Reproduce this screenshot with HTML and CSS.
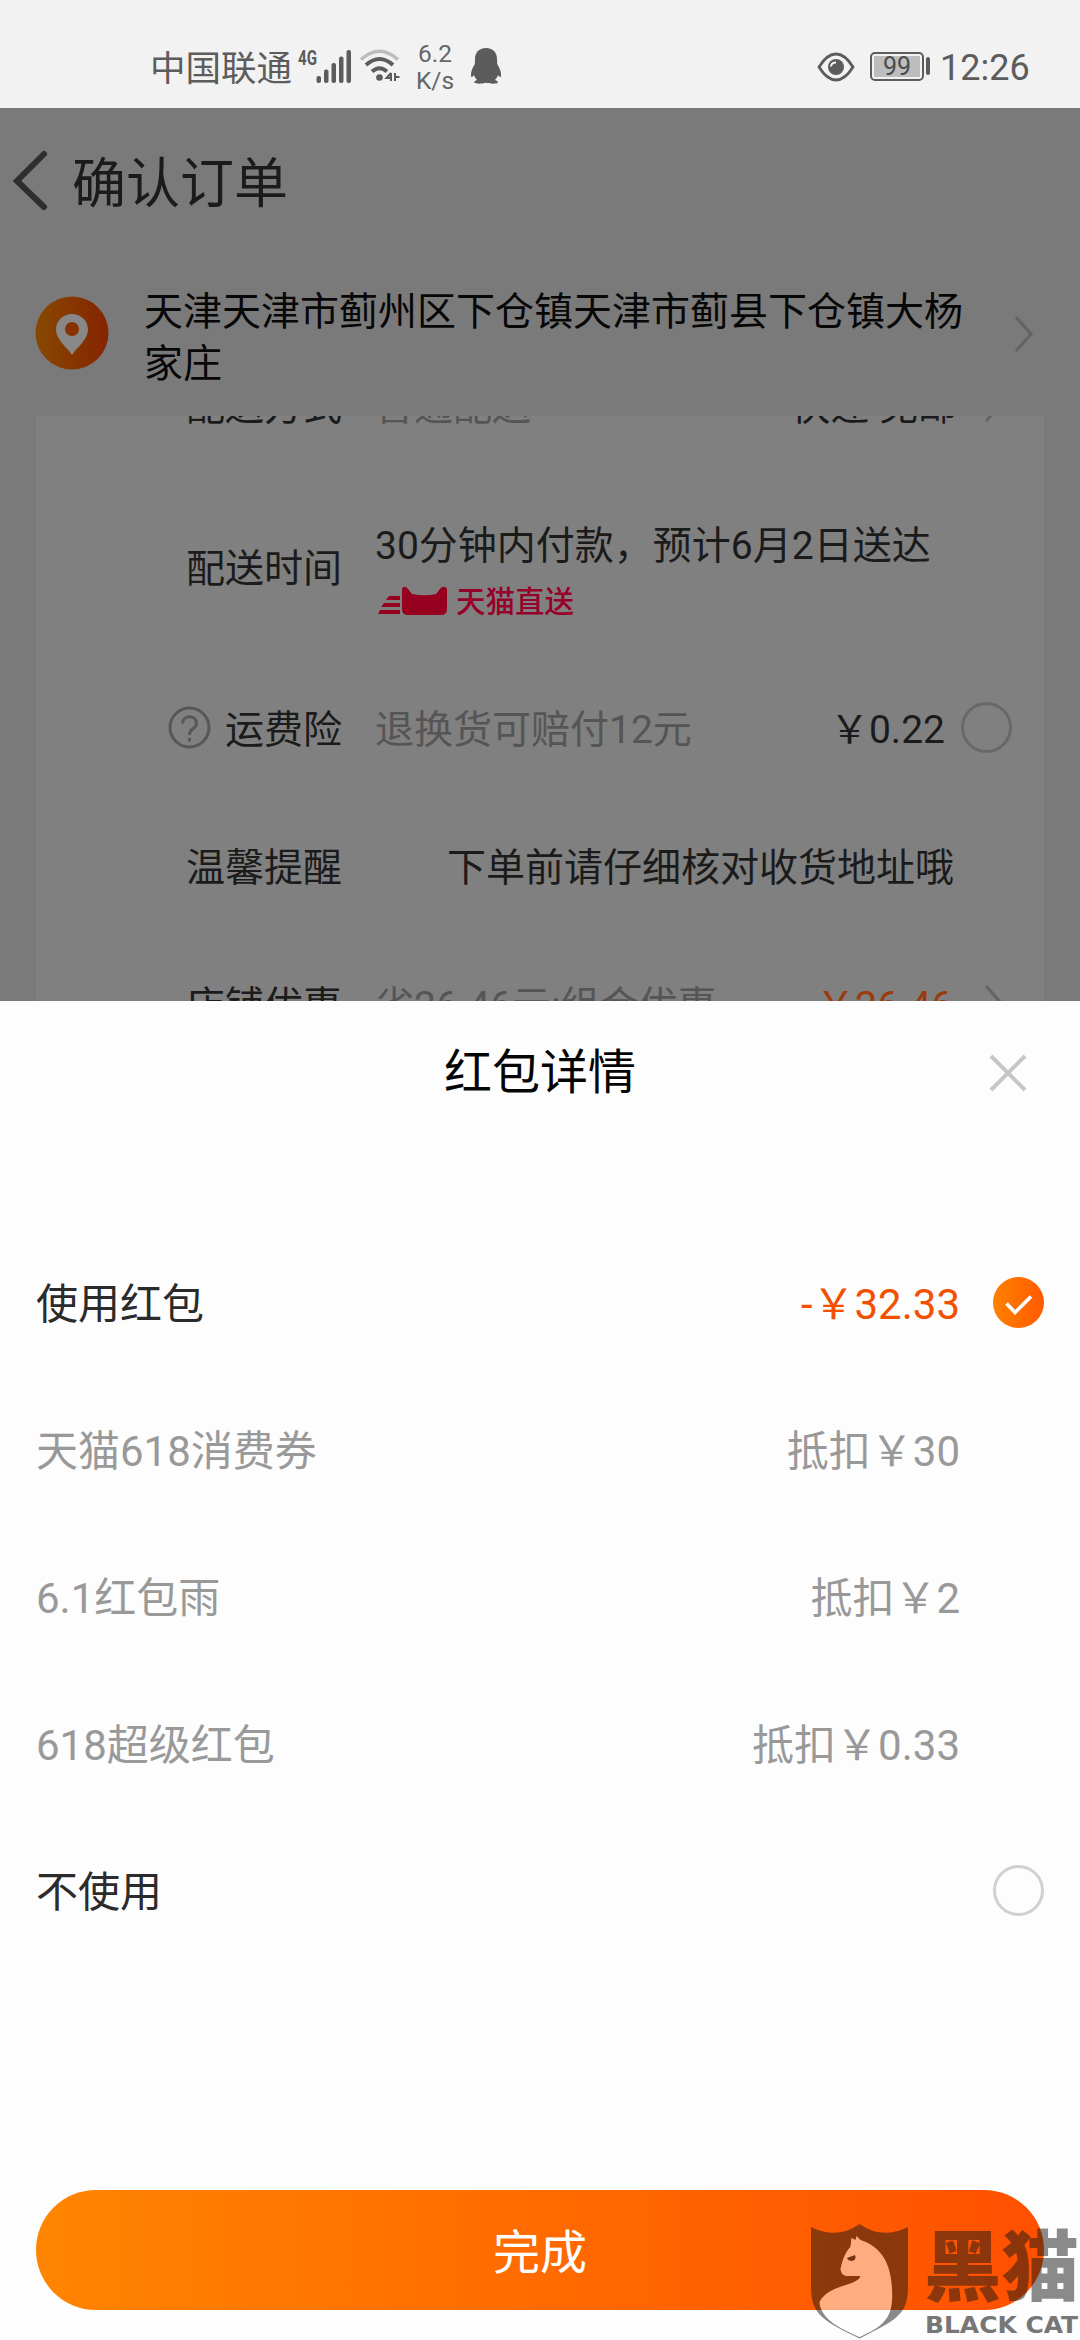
FILE: index.html
```html
<!DOCTYPE html>
<html lang="zh-CN">
<head>
<meta charset="utf-8">
<title>确认订单</title>
<link rel="stylesheet" href="styles.css">
</head>
<body>
<div class="phone">
  <header class="status">
    <span class="carrier">中国联通</span>
    <svg class="signal" width="56" height="40" viewBox="0 0 56 40" fill="#5c5c5c">
      <text class="net" x="1" y="18" textLength="19" lengthAdjust="spacingAndGlyphs">4G</text>
      <rect x="19.5" y="29" width="4.5" height="7" rx="2"/><rect x="27" y="22.500" width="4.500" height="13.500" rx="2"/><rect x="34.500" y="16" width="4.500" height="20" rx="2"/><rect x="42" y="9.500" width="4.500" height="26.500" rx="2"/><rect x="49.500" y="3" width="4.500" height="33" rx="2"/>
    </svg>
    <svg class="wifi" width="42" height="34" viewBox="0 0 42 34" fill="none" stroke-width="4">
      <path d="M2 10.500Q20.500-6 39 10.500" stroke="#bcbcbc" stroke-width="3.500"/>
      <path d="M7 16Q20.500 4 34 16" stroke="#5c5c5c"/>
      <path d="M13 22.500Q20.500 16 28 22.500" stroke="#5c5c5c"/>
      <circle cx="20.500" cy="28.500" r="3.300" fill="#5c5c5c"/>
      <path d="M32 24v8m0-8-4.500 5H33M36 32v-8m0 8v-4h4.500" stroke="#5c5c5c" stroke-width="2"/>
    </svg>
    <div class="speed"><span>6.2</span><span>K/s</span></div>
    <svg class="penguin" width="32" height="36" viewBox="0 0 32 36" fill="#5c5c5c">
      <path d="M16 0C8.500 0 5 5 5 11l-.2 5C2.500 20 .5 24 1 28c.2 1.500 1.700 1.200 3-1 .6 2 1.700 3.600 3.200 5-2 .5-3 1.300-3 2.500 0 1.500 8 1.500 11.800.3 3.800 1.200 11.800 1.200 11.800-.3 0-1.200-1-2-3-2.500 1.500-1.400 2.600-3 3.200-5 1.300 2.200 2.800 2.500 3 1 .5-4-1.500-8-3.800-12L27 11C27 5 23.500 0 16 0z"/>
    </svg>
    <svg class="eye" width="38" height="30" viewBox="0 0 38 30" fill="none" stroke="#5c5c5c" stroke-width="2.800">
      <path d="M2 15Q10 2 19 2T36 15Q28 28 19 28T2 15z"/><circle cx="19" cy="15" r="8" fill="#5c5c5c" stroke="none"/><path d="M14 14.500Q14.500 10.500 19 10.500" stroke="#f2f2f2" stroke-width="2"/>
    </svg>
    <div class="battery"><span class="level">99</span></div><i class="nub"></i>
    <span class="clock">12:26</span>
  </header>

  <main class="order">
    <div class="nav">
      <svg width="36" height="62" viewBox="0 0 36 62" fill="none" stroke="#2e2e2e" stroke-width="6" stroke-linecap="round"><path d="M32 4 5 31l27 26"/></svg>
      <h1>确认订单</h1>
    </div>
    <div class="address">
      <svg class="pin" width="74" height="74" viewBox="0 0 74 74">
        <defs><linearGradient id="pin"><stop offset="0" stop-color="#874800"/><stop offset="1" stop-color="#862400"/></linearGradient></defs>
        <circle cx="37" cy="37" r="36.500" fill="url(#pin)"/>
        <path d="M37 18c-9 0-16 7-16 15.500C21 44 32 51 37 59c5-8 16-15 16-25.500C53 25 46 18 37 18z" fill="#888"/><circle cx="37" cy="33" r="7" fill="#873200"/>
      </svg>
      <p>天津天津市蓟州区下仓镇天津市蓟县下仓镇大杨家庄</p>
      <svg class="arrow" width="20" height="38" viewBox="0 0 20 38"><path d="m2 2 15 17L2 36"/></svg>
    </div>
    <section class="card">
      <div class="rows">
        <div class="row"><span class="label">配送方式</span><span class="value muted">普通配送</span><span class="end ship">快递 免邮</span><svg class="arrow" width="20" height="38" viewBox="0 0 20 38"><path d="m2 2 15 17L2 36"/></svg></div>
        <div class="row tall"><span class="label">配送时间</span>
          <div class="value stack"><span>30分钟内付款，预计6月2日送达</span>
            <div class="tag"><svg width="72" height="32" viewBox="0 0 72 32" fill="#97001e"><path d="M11 10h11v4H8zM6 17h16v4H3zM2 24h20v4H0zM24 4c0-4 4-4 6-1l4 5q14 2.500 24 0l4-5c2-3 7-3 7 1v19q0 6-6 6H30q-6 0-6-6z"/></svg><b>天猫直送</b></div>
          </div></div>
        <div class="row"><span class="label"><svg class="help" width="43" height="43" viewBox="0 0 43 43" fill="none" stroke="#575757" stroke-width="3"><circle cx="21.500" cy="21.500" r="19.500"/><path d="M14.500 17.500c0-9 14-9 14 0 0 5-7 5.500-7 10.500v1M21.500 32v3.500"/></svg>运费险</span><span class="value muted">退换货可赔付12元</span><span class="end fee">￥0.22</span><i class="radio dim"></i></div>
        <div class="row"><span class="label">温馨提醒</span><span class="end note">下单前请仔细核对收货地址哦</span></div>
        <div class="row"><span class="label">店铺优惠</span><span class="value muted">省26.46元:组合优惠</span><span class="end price">￥26.46</span><svg class="arrow" width="20" height="38" viewBox="0 0 20 38"><path d="m2 2 15 17L2 36"/></svg></div>
      </div>
    </section>
  </main>

  <section class="sheet">
    <div class="sheet-head"><h2>红包详情</h2>
      <svg class="close" width="38" height="38" viewBox="0 0 38 38" stroke="#c6c6c6" stroke-width="4"><path d="m2 2 34 34M36 2 2 36"/></svg>
    </div>
    <ul class="options">
      <li class="strong"><span>使用红包</span><span class="amount hot">-￥32.33</span>
        <svg class="check" width="51" height="51" viewBox="0 0 51 51"><defs><linearGradient id="ck"><stop offset="0" stop-color="#ff8000"/><stop offset="1" stop-color="#ff5a00"/></linearGradient></defs><circle cx="25.500" cy="25.500" r="25.500" fill="url(#ck)"/><path d="m13.500 26.500 8.500 9 16-16" fill="none" stroke="#fff" stroke-width="3.600"/></svg></li>
      <li><span>天猫618消费券</span><span class="amount">抵扣￥30</span><i class="blank"></i></li>
      <li><span>6.1红包雨</span><span class="amount">抵扣￥2</span><i class="blank"></i></li>
      <li><span>618超级红包</span><span class="amount">抵扣￥0.33</span><i class="blank"></i></li>
      <li class="strong"><span>不使用</span><i class="radio"></i></li>
    </ul>
    <button class="done">完成</button>
  </section>

  <svg class="mark" width="270" height="116" viewBox="0 0 270 116">
    <path fill-rule="evenodd" fill="#181818" fill-opacity=".5" d="M1 3q26 13 48.500-3Q72 16 98 3v60c0 28-12 33-48.500 51.500C14 97 1 91 1 63zM10 82c5 15 18 21 39.500 31 12-6 19-9 24-15 8-8 10-20 8-39-2-22-12-37-31-43l-4-4-1 4-4-2-1 9c-6 6-8 14-10 22 1 5 3 7 7 7h13c-2 10-32 8-41 26z"/>
    <path fill="#fff" fill-opacity=".5" d="M10 82c5 15 18 21 39.500 31 12-6 19-9 24-15 8-8 10-20 8-39-2-22-12-37-31-43l-4-4-1 4-4-2-1 9c-6 6-8 14-10 22 1 5 3 7 7 7h13c-2 10-32 8-41 26z"/>
    <path fill="#753210" d="m37 34 8-3q2 5-3 6-4 0-5-3z"/>
    <text class="mark-cn" x="114" y="71" textLength="155" lengthAdjust="spacingAndGlyphs">黑猫</text>
    <text class="mark-en" x="115" y="109" textLength="153" lengthAdjust="spacingAndGlyphs">BLACK CAT</text>
  </svg>
</div>
</body>
</html>
```
FILE: styles.css
```css
* { box-sizing: border-box; margin: 0; padding: 0; }
body { width: 1080px; height: 2340px; overflow: hidden; font-family: Roboto, "Noto Sans CJK SC", sans-serif; font-size: 39px; }
svg { display: block; flex: none; }
i { flex: none; }
.phone { position: relative; height: 2340px; display: flex; flex-direction: column; background: #fdfdfd; }

.status { height: 108px; padding-left: 150px; padding-top: 22px; display: flex; align-items: center; background: #f2f2f2; color: #5c5c5c; flex: none; }
.carrier { font-size: 35.5px; font-weight: 400; line-height: 44px; margin-top: 7px; }
.signal { margin-left: 5px; margin-top: 4px; }
.net { font: 700 20px Roboto, sans-serif; }
.wifi { margin-left: 6px; margin-top: 2px; }
.speed { display: flex; flex-direction: column; align-items: center; font-size: 24.500px; line-height: 27px; margin-left: 14px; margin-top: 3px; width: 40px; color: #666; }
.penguin { margin-left: 15px; margin-top: 2px; }
.eye { margin-left: 315px; margin-top: 3px; }
.battery { margin-left: 15px; margin-top: 2px; width: 54px; height: 29px; border: 2px solid #5c5c5c; border-radius: 5px; padding: 2px; }
.level { display: block; height: 21px; background: #bdbdbd; color: #4c4c4c; font-size: 25px; line-height: 22px; text-align: center; }
.nub { width: 4px; height: 18px; border-radius: 2px; background: #5c5c5c; margin-left: 2px; margin-top: 2px; }
.clock { margin-left: 10px; font-size: 36px; font-weight: 400; line-height: 44px; margin-top: 6px; }

.order { height: 893px; background: #7a7a7a; overflow: hidden; flex: none; display: flex; flex-direction: column; color: #1b1b1b; }
.nav { height: 146px; flex: none; display: flex; align-items: center; padding-left: 12px; }
.nav h1 { font-size: 54px; font-weight: 400; line-height: 70px; margin-left: 24px; margin-top: 7px; }
.address { height: 162px; flex: none; display: flex; padding: 42px 46px 0 35px; color: #070707; }
.address p { width: 820px; margin-left: 35px; line-height: 51.500px; margin-top: -9px; }
.address .arrow { margin: 19px 0 0 auto; }
.arrow path { fill: none; stroke: #646464; stroke-width: 3.200; }
.card { flex: 1; margin: 0 36px; background: #808080; overflow: hidden; }
.rows { margin-top: -79px; }
.row { height: 138px; padding-left: 108px; padding-right: 40px; display: grid; grid-template-columns: 198px auto 1fr auto; align-items: center; line-height: 50px; white-space: nowrap; padding-top: 1px; }
.row .arrow { margin-top: -5px; }
.row.tall { height: 185px; }
.tall .label { padding-top: 2px; }
.label { display: flex; align-items: center; justify-content: flex-end; width: 198px; }
.help { margin-right: auto; margin-left: 24px; margin-top: -4px; }
.value { margin-left: 33px; }
.muted { color: #555; }
.end { text-align: right; padding-right: 32px; }
.ship { padding-right: 27px; }
.fee { padding-right: 16px; }
.row .radio { margin-right: -8px; }
.row .note { grid-column: 2 / 5; padding-right: 50px; margin-right: 0; }
.price { color: #9b3a0c; padding-right: 31px; }
.stack { display: flex; flex-direction: column; padding-top: 4px; }
.tag { display: flex; align-items: center; height: 36px; margin-top: 13px; padding-left: 3px; color: #97002a; }
.tag b { font-size: 29.500px; font-weight: 500; margin-left: 6px; padding-top: 1px; }
.radio { width: 51px; height: 51px; border: 3px solid #d0d0d0; border-radius: 50%; }
.radio.dim { border-color: #686868; margin-top: -5px; }

.sheet { flex: 1; display: flex; flex-direction: column; background: #fdfdfd; padding: 0 36px; }
.sheet-head { height: 144px; flex: none; display: grid; grid-template-columns: 1fr auto 1fr; align-items: center; }
.sheet-head h2 { grid-column: 2; font-size: 48px; font-weight: 400; line-height: 60px; color: #050505; }
.close { justify-self: end; margin-right: 17px; }
.options { list-style: none; margin-top: 86px; font-size: 42px; color: #999; }
.options li { height: 147px; display: flex; align-items: center; line-height: 56px; padding-top: 1px; }
.strong { color: #2b2b2b; }
.amount { margin-left: auto; margin-right: 33px; }
.hot { color: #f05000; }
.check { margin-top: -5px; }
.blank { width: 51px; }
.options .radio { margin-left: auto; margin-top: -5px; }
.done { margin-top: 224px; height: 120px; flex: none; border: 0; border-radius: 60px; background: linear-gradient(90deg, #ff8500, #ff5000); color: #fff; font: 400 47px/120px Roboto, "Noto Sans CJK SC", sans-serif; padding-top: 3px; }

/* complaint-site stamp lying over the bottom right corner */
.mark { position: absolute; right: 0; bottom: 0; }
.mark-cn { font: 900 77px "Noto Sans CJK SC", sans-serif; fill: #181818; fill-opacity: .5; }
.mark-en { font: 700 23.500px "DejaVu Sans", sans-serif; fill: #777; }
```
